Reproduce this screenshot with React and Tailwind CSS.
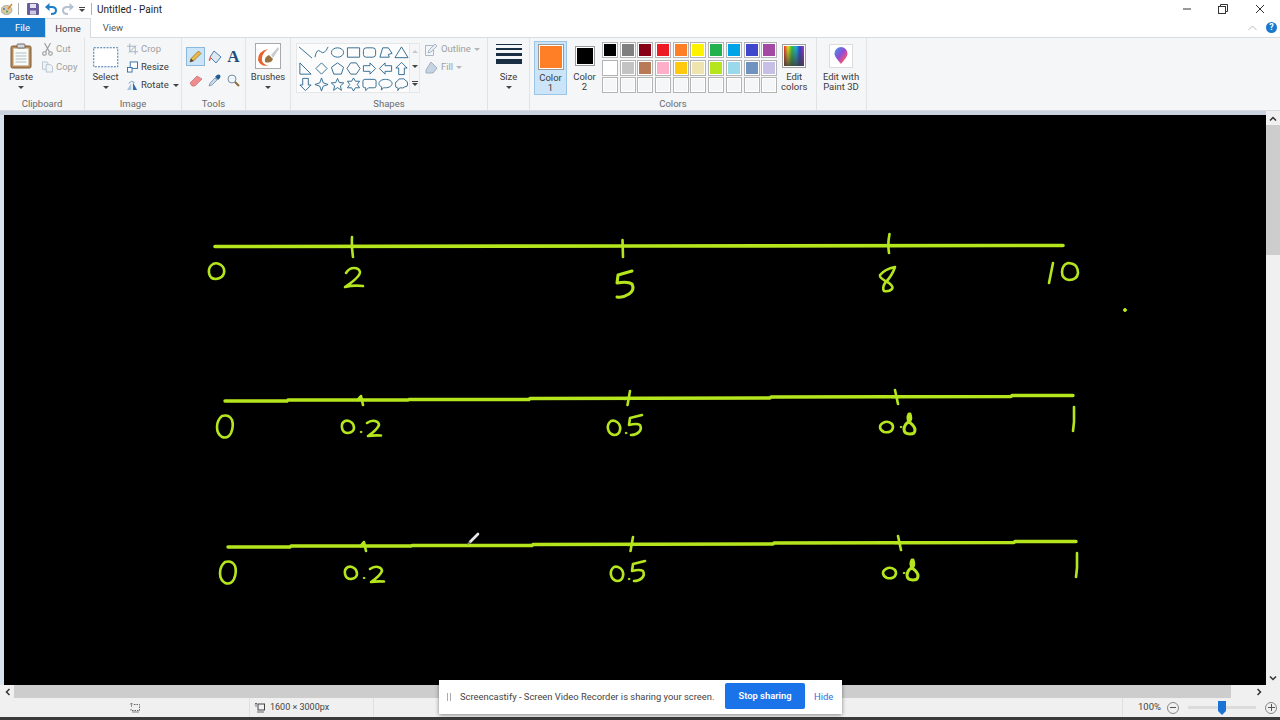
import React from "react";

const Tri = ({ c = "#444" }) => (
  <svg width="6" height="3" viewBox="0 0 6 3" className="block"><path d="M0 0h6L3 3z" fill={c} /></svg>
);

const Big = ({ w, icon, lines, arrow, className = "" }) => (
  <div className={`flex flex-col items-center pt-[5px] ${className}`} style={{ width: w }}>
    <div className="h-[29px] flex items-start justify-center">{icon}</div>
    {lines.map((l) => (
      <div key={l} className="h-[10px] leading-[10px] whitespace-nowrap">{l}</div>
    ))}
    {arrow && <div className="h-[10px] flex items-center"><Tri /></div>}
  </div>
);

const Small = ({ icon, label, gray, arrow }) => (
  <div className={`h-[18px] flex items-center gap-[3px] whitespace-nowrap ${gray ? "text-[#a0a0a0]" : "text-[#3c3c3c]"}`}>
    <span className="w-[11px] h-[12px] flex items-center justify-center shrink-0">{icon}</span>
    <span>{label}</span>
    {arrow && <span className="ml-[1px]"><Tri /></span>}
  </div>
);

const Group = ({ w, label, children }) => (
  <div className="flex flex-col h-full border-r border-[#e2e3e4] shrink-0" style={{ width: w }}>
    <div className="h-[59px] flex">{children}</div>
    <div className="h-[13px] leading-[13px] text-center text-[#6a6a6a]">{label}</div>
  </div>
);

const PasteIcon = () => (
  <svg width="22" height="26" viewBox="0 0 22 26">
    <rect x="1" y="3" width="20" height="22" rx="1.5" fill="#b98a5a" stroke="#7d5a35" />
    <rect x="3.5" y="5.5" width="15" height="17" fill="#fbfbf5" stroke="#c9c9b9" strokeWidth=".5" />
    <path d="M5.5 10h11M5.5 13h11M5.5 16h11M5.5 19h11" stroke="#a9bccb" />
    <rect x="7" y="1" width="8" height="4" rx="1" fill="#d8d8d8" stroke="#6a6a6a" />
  </svg>
);
const CutIcon = () => (
  <svg width="11" height="13" viewBox="0 0 11 13" fill="none" stroke="#9a9a9a" strokeWidth="1.1">
    <path d="M2.5 0l5 9M8.5 0l-5 9" /><circle cx="2.5" cy="10.5" r="1.8" /><circle cx="8.5" cy="10.5" r="1.8" />
  </svg>
);
const CopyIcon = () => (
  <svg width="12" height="12" viewBox="0 0 12 12" fill="#f1f4f7" stroke="#aebccb" strokeWidth=".9">
    <path d="M.5.5h5l1 1v7h-6z" /><path d="M4.5 3.5h5l2 2v6h-7z" />
  </svg>
);
const SelectIcon = () => (
  <svg width="26" height="21" viewBox="0 0 26 21" className="mt-[4px]">
    <rect x=".75" y=".75" width="24" height="19" fill="#fff" stroke="#3f78ad" strokeWidth="1" strokeDasharray="2 1.2" />
  </svg>
);
const CropIcon = () => (
  <svg width="12" height="12" viewBox="0 0 12 12" fill="none" stroke="#9fb0c2" strokeWidth="1">
    <path d="M3 0v9h9M0 3h9v9M2 10l8-8" />
  </svg>
);
const ResizeIcon = () => (
  <svg width="12" height="12" viewBox="0 0 12 12" fill="none" stroke="#2f6ea8" strokeWidth="1">
    <rect x="3.5" y=".5" width="8" height="7" fill="#fff" /><rect x=".5" y="6.5" width="5" height="5" fill="#fff" />
  </svg>
);
const RotateIcon = () => (
  <svg width="13" height="12" viewBox="0 0 13 12">
    <path d="M0 12L5 4v8z" fill="#a8c4de" /><path d="M7 12V3l5 9z" fill="#2f6ea8" /><path d="M2 4q3-4 7-1" fill="none" stroke="#5f8fbd" />
  </svg>
);
const PencilIcon = () => (
  <svg width="13" height="13" viewBox="0 0 13 13">
    <path d="M1 12l1-3.5L9.5 1 12 3.5 4.5 11z" fill="#e9b949" stroke="#8a6a2a" strokeWidth=".7" /><path d="M1 12l1-3.5 2.5 2.5z" fill="#444" />
  </svg>
);
const FillIcon = () => (
  <svg width="14" height="14" viewBox="0 0 14 14">
    <path d="M6 1l7 6-5 6-6-6z" fill="#dfe8f2" stroke="#4b7fb1" /><path d="M3 6Q0 9 1 11q2 0 2-5z" fill="#e2574c" />
  </svg>
);
const EraserIcon = () => (
  <svg width="14" height="12" viewBox="0 0 14 12">
    <path d="M1 8l7-7 5 3-7 7H3z" fill="#ee8d90" stroke="#c56a70" strokeWidth=".7" />
  </svg>
);
const PickerIcon = () => (
  <svg width="13" height="13" viewBox="0 0 13 13">
    <path d="M1 12l1-3 5-5 2 2-5 5z" fill="#c8d8e8" stroke="#53789b" strokeWidth=".6" /><path d="M7 3l2-2q2-1 3 0t0 3L10 6z" fill="#1f5d94" />
  </svg>
);
const MagIcon = () => (
  <svg width="13" height="13" viewBox="0 0 13 13" fill="none">
    <circle cx="5" cy="5" r="4" fill="#eef5fb" stroke="#7a8fa5" /><path d="M8 8l4 4" stroke="#8a6a3a" strokeWidth="2" />
  </svg>
);
const BrushIcon = () => (
  <svg width="26" height="26" viewBox="0 0 26 26">
    <rect x=".5" y=".5" width="25" height="25" fill="#fff" stroke="#a9a9a9" />
    <path d="M3 17Q3 8 13 6 6 11 7 18q2 5 8 4-9 3-12-5z" fill="#e8622a" />
    <path d="M10 19q-1-5 4-7l4 4q-2 5-8 3z" fill="#9a7040" />
    <path d="M16 12l7-8 1 2-6 9z" fill="#c9ccd0" />
  </svg>
);
const OutlineIcon = () => (
  <svg width="13" height="13" viewBox="0 0 13 13" fill="none" stroke="#a9b8c8">
    <path d="M.5 2.5h8v10h-8z" /><path d="M3 10l1-3 6-6 2 2-6 6z" fill="#e9ecf0" />
  </svg>
);
const FillShapeIcon = () => (
  <svg width="13" height="13" viewBox="0 0 13 13">
    <path d="M6 1l6 6-4 5H1v-3z" fill="#c5d3e2" stroke="#9fb0c2" />
  </svg>
);

const shapes = [
  <path d="M1 2l14 12" />,
  <path d="M1 13Q3 3 7 7t8-5" />,
  <ellipse cx="8" cy="8" rx="6.5" ry="5" />,
  <rect x="1.5" y="3" width="13" height="10" />,
  <rect x="1.5" y="3" width="13" height="10" rx="3" />,
  <path d="M2 13l3-10h6l4 6-4 1 1 3z" />,
  <path d="M8 2l7 11.5H1z" />,
  <path d="M2 2l12 12H2z" />,
  <path d="M8 2l6 6-6 6-6-6z" />,
  <path d="M8 2l6.5 4.7-2.5 7.3H4L1.5 6.7z" />,
  <path d="M5 2h6l4 6-4 6H5L1 8z" />,
  <path d="M1.5 5h7V2l6 6-6 6v-3h-7z" />,
  <path d="M14.5 5h-7V2l-6 6 6 6v-3h7z" />,
  <path d="M5 14.5v-7H2l6-6 6 6h-3v7z" />,
  <path d="M5 1.5v7H2l6 6 6-6h-3v-7z" />,
  <path d="M8 1l1.8 5.2L15 8l-5.2 1.8L8 15l-1.8-5.2L1 8l5.2-1.8z" />,
  <path d="M8 1.5l1.9 4.4 4.8.4-3.6 3.2 1.1 4.7L8 11.3l-4.2 2.9 1.1-4.7-3.6-3.2 4.8-.4z" />,
  <path d="M8 1l2 3.5h4.5L12 8l2.5 3.5H10L8 15l-2-3.5H1.5L4 8 1.5 4.5H6z" />,
  <path d="M3 2.5h10q2 0 2 2v5q0 2-2 2H7l-3 3v-3H3q-2 0-2-2v-5q0-2 2-2z" />,
  <path d="M8 2.5c4 0 7 2 7 4.5s-3 4.5-7 4.5q-1 0-2-.2L3.5 14l.5-3.4C2 9.800 1 8.500 1 7c0-2.500 3-4.500 7-4.500z" />,
  <path d="M4 4q1-3 4-2 3-1 4 1.500 3 1 2.500 4 .5 3-3 3-2 2-4 1-1 0-2 .5L4 14.500 4.500 12Q1 11.500 1.500 8 1 5 4 4z" />,
];

const row1 = ["#000000", "#7f7f7f", "#880015", "#ed1c24", "#ff7f27", "#fff200", "#22b14c", "#00a2e8", "#3f48cc", "#a349a4"];
const row2 = ["#ffffff", "#c3c3c3", "#b97a57", "#ffaec9", "#ffc90e", "#efe4b0", "#b5e61d", "#99d9ea", "#7092be", "#c8bfe7"];
const row3 = Array(10).fill("#f5f6f7");

const Swatch = ({ c }) => (
  <div className="w-[16px] h-[16px] border border-[#b4b4b4] bg-white p-[1px]">
    <div className="w-full h-full" style={{ background: c }} />
  </div>
);

const Drawing = () => (
  <svg viewBox="4 115 1262 570" width="1262" height="570" className="block" fill="none" stroke="#b5e61d" strokeLinecap="round" strokeLinejoin="round" strokeWidth="2.600">
    <path d="M215 246.500L640 246L1063 245.500" strokeWidth="3.600" />
    <path d="M352 237q-.5 10 1 20M622.500 240l.5 17M889.500 234q-2 10-.5 19" />
    <path d="M213 264q-5 3-4 9t7 6q7-1 8-6t-3-8q-4-3-8-1z" />
    <path d="M346 273q3-5 8-5t6 4q0 5-15 15 8-2 18-1" />
    <path d="M632 271l-14 4-1 8q11-2 15 1 3 6-3 10t-12 3" strokeWidth="3" />
    <path d="M895 267q-10 2-15 8-1 3 9 8 5 4 3 6-3 3-8 2-2-3 1-8 7-7 10-16" />
    <path d="M1053 263l-4 20" />
    <path d="M1068 263q-6 2-6 9t7 8q8 0 9-7 0-7-5-9-3-1-5-1z" />
    <circle cx="1125" cy="310" r="1.500" fill="#b5e61d" strokeWidth="1" />

    {[0, 1].map((i) => (
      <g key={i} transform={i ? "translate(3 146)" : undefined}>
        <path d="M225 401L287 401L288 400L408 400L409 399.500L529 399.500L530 398.500L770 398L771 397L1011 396.500L1012 395.500L1073 395.500" strokeWidth="3.400" />
        <path d="M360 397l-2.500 3M361 396l2 9M630 391l-2.500 14M625 399l4-1M895 390l3 14M892 397l7 0" />
        <path d="M222 416q-5 4-5 11t5 10q6 2 9-4 3-7 1-13-3-6-10-4z" />
        <path d="M345 421q-4 2-3 7t6 5q6-1 6-5t-3-6q-3-2-6-1z" />
        <circle cx="361" cy="432" r=".8" fill="#b5e61d" strokeWidth="1" />
        <path d="M367 423q4-3 8-2t4 4q-2 5-11 11 6-1 13-.5" />
        <path d="M611 421q-4 3-3 8t6 6q5 0 6-5t-3-8q-3-2-6-1z" />
        <circle cx="626" cy="433" r=".8" fill="#b5e61d" strokeWidth="1" />
        <path d="M642 415l-12 3-1 7q8-2 11 0 2 4-1 7t-8 3" />
        <path d="M885 422q-5 2-5 5t4 5q6 1 8-2t0-6q-3-3-7-2z" />
        <circle cx="901" cy="427" r=".8" fill="#b5e61d" strokeWidth="1" />
        <path d="M909 414q-2 4 0 8 6 4 6 8t-5 4q-6 0-6-5 1-6 5-7 3-3 1-8" strokeWidth="3" />
        <path d="M1074 407l0 15-1 9" />
      </g>
    ))}
    <path d="M470 542l8-8" stroke="#e8e8e8" strokeWidth="2.600" />
    <path d="M468 544l2-2" stroke="#8a8a8a" strokeWidth="1.500" />
  </svg>
);

export default function App() {
  return (
    <div className="relative w-[1280px] h-[720px] overflow-hidden flex flex-col bg-white text-[9.5px] text-[#3c3c3c] font-['Roboto',sans-serif]">
      {/* Title bar */}
      <div className="h-[18px] flex items-center shrink-0 pl-[1px]">
        <svg width="12" height="12" viewBox="0 0 12 12">
          <ellipse cx="5.500" cy="7" rx="5.500" ry="4.500" fill="#d9c9a0" stroke="#8a9aa8" strokeWidth=".7" />
          <circle cx="3" cy="6" r="1" fill="#3f78c8" /><circle cx="6" cy="8.500" r="1" fill="#3fa060" />
          <path d="M7 6l4-5" stroke="#d9822b" strokeWidth="1.500" />
        </svg>
        <span className="w-px h-[12px] bg-[#b0b0b0] ml-[5px]" />
        <svg width="12" height="12" viewBox="0 0 12 12" className="ml-[8px]">
          <path d="M.5.5h10l1 1v10H.500z" fill="#6a5a9e" stroke="#4e4380" strokeWidth=".7" />
          <rect x="3" y="1" width="6" height="4" fill="#e4e1ee" /><rect x="3" y="7.500" width="6" height="4" fill="#cfc9e2" />
        </svg>
        <svg width="12" height="12" viewBox="0 0 12 12" fill="none" className="ml-[6px]">
          <path d="M2 4h5q4 0 4 3.500T6 11" stroke="#1e7fc7" strokeWidth="2" /><path d="M4.500 0v8L0 4z" fill="#1e7fc7" />
        </svg>
        <svg width="12" height="12" viewBox="0 0 12 12" fill="none" className="ml-[5px]">
          <path d="M10 4H5Q1 4 1 7.500T6 11" stroke="#b4c2d0" strokeWidth="2" /><path d="M7.500 0v8L12 4z" fill="#b4c2d0" />
        </svg>
        <div className="ml-[5px] flex flex-col items-center gap-[1px]">
          <span className="w-[6px] h-px bg-[#444]" />
          <Tri />
        </div>
        <span className="w-px h-[12px] bg-[#b0b0b0] ml-[6px]" />
        <span className="ml-[5px] pt-[2px] text-[10px] leading-none text-[#222] whitespace-nowrap">Untitled - Paint</span>
        <div className="ml-auto flex items-center text-[#333]">
          <svg width="10" height="10" viewBox="0 0 10 10" className="mr-[26px]"><path d="M1 5h8" stroke="#333" /></svg>
          <svg width="10" height="10" viewBox="0 0 10 10" fill="none" stroke="#333" className="mr-[27px]"><path d="M2.500 2.500V.5h7v7h-2" /><rect x=".5" y="2.500" width="7" height="7" /></svg>
          <svg width="10" height="10" viewBox="0 0 10 10" className="mr-[15px]"><path d="M1 1l8 8M9 1l-8 8" stroke="#333" /></svg>
        </div>
      </div>

      {/* Tabs */}
      <div className="h-[19px] flex shrink-0 items-stretch relative">
        <div className="w-[45px] bg-[#1979ca] text-white text-center leading-[19px]">File</div>
        <div className="w-[46px] bg-[#f5f6f7] border-x border-t border-[#dadbdc] text-center leading-[19px] -mb-px z-10">Home</div>
        <div className="w-[44px] text-center leading-[19px] text-[#555]">View</div>
        <div className="ml-auto flex items-center">
          <svg width="9" height="6" viewBox="0 0 9 6" fill="none" className="mr-[9px]"><path d="M.5 5L4.500 1 8.500 5" stroke="#b9b9b9" /></svg>
          <span className="w-[11px] h-[11px] rounded-full bg-[#1979ca] text-white text-[9px] font-bold leading-[11px] text-center mr-[3px]">?</span>
        </div>
      </div>

      {/* Ribbon */}
      <div className="h-[74px] shrink-0 bg-[#f5f6f7] border-y border-[#dadbdc] flex">
        <Group w={85} label="Clipboard">
          <Big w={42} className="pt-[5px]" icon={<PasteIcon />} lines={["Paste"]} arrow />
          <div className="pt-[2px] text-[#a0a0a0]">
            <Small gray icon={<CutIcon />} label="Cut" />
            <Small gray icon={<CopyIcon />} label="Copy" />
          </div>
        </Group>
        <Group w={97} label="Image">
          <Big w={41} icon={<SelectIcon />} lines={["Select"]} arrow />
          <div className="pt-[2px] pl-[1px]">
            <Small gray icon={<CropIcon />} label="Crop" />
            <Small icon={<ResizeIcon />} label="Resize" />
            <Small icon={<RotateIcon />} label="Rotate" arrow />
          </div>
        </Group>
        <Group w={64} label="Tools">
          <div className="grid grid-cols-[19px_19px_19px] grid-rows-[19px_19px] gap-y-[5px] ml-[4px] mt-[9px] place-items-center">
            <div className="w-[19px] h-[19px] bg-[#cce4f7] border border-[#8bb8dd] flex items-center justify-center"><PencilIcon /></div>
            <FillIcon />
            <span className="font-['Liberation_Serif',serif] font-bold text-[17px] leading-none text-[#1f4e79]">A</span>
            <EraserIcon />
            <PickerIcon />
            <MagIcon />
          </div>
        </Group>
        <Group w={45} label="">
          <Big w={44} icon={<BrushIcon />} lines={["Brushes"]} arrow />
        </Group>
        <Group w={197} label="Shapes">
          <div className="ml-[5px] mt-[5px] h-[50px] w-[114px] bg-white/70 border border-[#e6e7e8] grid grid-cols-[repeat(7,16px)] grid-rows-[repeat(3,16px)] shrink-0 items-center pl-[1px]">
            {shapes.map((s, i) => (
              <svg key={i} width="15" height="15" viewBox="0 0 16 16" fill="none" stroke="#2f6a8f" strokeWidth="1" strokeLinejoin="round">{s}</svg>
            ))}
          </div>
          <div className="w-[10px] mt-[5px] h-[50px] flex flex-col items-center justify-around border-y border-r border-[#e6e7e8] shrink-0">
            <svg width="6" height="3" viewBox="0 0 6 3"><path d="M3 0l3 3H0z" fill="#c9c9c9" /></svg>
            <Tri />
            <div className="flex flex-col items-center gap-[1px]"><span className="w-[6px] h-px bg-[#444]" /><Tri /></div>
          </div>
          <div className="ml-[5px] pt-[2px] text-[#a0a0a0]">
            <div className="h-[18px] flex items-center gap-[3px]"><OutlineIcon /><span>Outline</span><Tri c="#b5b5b5" /></div>
            <div className="h-[18px] flex items-center gap-[3px]"><FillShapeIcon /><span>Fill</span><Tri c="#b5b5b5" /></div>
          </div>
        </Group>
        <Group w={42} label="">
          <Big
            w={41}
            icon={
              <div className="w-[26px] flex flex-col mt-[1px]">
                <span className="h-px bg-[#1a2e44]" />
                <span className="h-[2px] bg-[#1a2e44] mt-[3px]" />
                <span className="h-[3px] bg-[#1a2e44] mt-[3px]" />
                <span className="h-[5px] bg-[#1a2e44] mt-[3px]" />
              </div>
            }
            lines={["Size"]}
            arrow
          />
        </Group>
        <Group w={287} label="Colors">
          <div className="ml-[4px] mt-[3px] w-[33px] h-[54px] bg-[#cce4f7] border border-[#9cc4e4] flex flex-col items-center shrink-0 pt-[2px]">
            <div className="w-[26px] h-[26px] border border-[#9a9a9a] bg-white p-[1px]"><div className="w-full h-full bg-[#ff7f27]" /></div>
            <div className="h-[3px]" />
            <div className="h-[10px] leading-[10px]">Color</div>
            <div className="h-[10px] leading-[10px]">1</div>
          </div>
          <div className="w-[35px] flex flex-col items-center pt-[8px] shrink-0">
            <div className="h-[26px]">
              <div className="w-[20px] h-[20px] border border-[#9a9a9a] bg-white p-[1px]"><div className="w-full h-full bg-black" /></div>
            </div>
            <div className="h-[10px] leading-[10px]">Color</div>
            <div className="h-[10px] leading-[10px]">2</div>
          </div>
          <div className="mt-[4px] grid grid-cols-[repeat(10,16px)] grid-rows-[repeat(3,16px)] gap-x-[1.7px] gap-y-[1.5px] shrink-0 self-start">
            {[...row1, ...row2, ...row3].map((c, i) => <Swatch key={i} c={c} />)}
          </div>
          <Big
            w={36}
            className="ml-[-1px] shrink-0"
            icon={
              <div className="w-[24px] h-[24px] border border-[#a0a0a0] bg-white p-[1px] mt-[1px]">
                <div className="w-full h-full bg-[linear-gradient(90deg,#e03030,#f0e020,#30c040,#20b0e0,#3040d0,#c030c0)] relative">
                  <div className="w-full h-full bg-[linear-gradient(180deg,transparent,rgba(60,60,60,.85))]" />
                </div>
              </div>
            }
            lines={["Edit", "colors"]}
          />
        </Group>
        <Group w={50} label="">
          <Big
            w={48}
            icon={
              <div className="w-[24px] h-[24px] bg-white border border-[#dcdcdc] flex items-center justify-center mt-[1px]">
                <svg width="14" height="18" viewBox="0 0 14 18">
                  <defs>
                    <linearGradient id="p3d" x1="0" y1="0" x2="1" y2="1">
                      <stop offset="0" stopColor="#3aa0f0" /><stop offset=".45" stopColor="#8a50d8" /><stop offset=".75" stopColor="#f0507a" /><stop offset="1" stopColor="#f8a040" />
                    </linearGradient>
                  </defs>
                  <path d="M7 17C4 13 .5 10 .5 6.500a6.500 6.500 0 0113 0C13.500 10 10 13 7 17z" fill="url(#p3d)" />
                </svg>
              </div>
            }
            lines={["Edit with", "Paint 3D"]}
          />
        </Group>
      </div>

      {/* Canvas area */}
      <div className="flex-1 min-h-0 flex flex-col bg-[#d7e2ef]">
        <div className="flex flex-1 min-h-0">
          <div className="flex-1 min-w-0 flex flex-col">
            <div className="h-[4px] bg-[#c9d3e0] shrink-0" />
            <div className="pl-[4px] flex-1 min-h-0">
              <div className="w-full h-full bg-black"><Drawing /></div>
            </div>
          </div>
          <div className="w-[14px] bg-[#f0f0f0] flex flex-col items-center shrink-0 text-[#444]">
            <div className="h-[14px] flex items-center">
              <svg width="8" height="5" viewBox="0 0 8 5" fill="none"><path d="M1 4.500L4 1.500 7 4.500" stroke="#333" strokeWidth="1.500" /></svg>
            </div>
            <div className="w-full h-[130px] bg-[#cdcdcd]" />
            <div className="flex-1" />
            <div className="h-[14px] flex items-center">
              <svg width="8" height="5" viewBox="0 0 8 5" fill="none"><path d="M1 .5L4 3.500 7 .5" stroke="#333" strokeWidth="1.500" /></svg>
            </div>
          </div>
        </div>
        {/* Horizontal scrollbar */}
        <div className="h-[13px] shrink-0 bg-[#f0f0f0] flex items-center">
          <div className="w-[14px] flex justify-center">
            <svg width="5" height="8" viewBox="0 0 5 8" fill="none"><path d="M4.500 1L1.500 4 4.500 7" stroke="#333" strokeWidth="1.500" /></svg>
          </div>
          <div className="w-[1217px] h-full bg-[#cdcdcd]" />
          <div className="flex-1 flex justify-end pr-[18px]">
            <svg width="5" height="8" viewBox="0 0 5 8" fill="none"><path d="M.5 1L3.500 4 .5 7" stroke="#333" strokeWidth="1.500" /></svg>
          </div>
        </div>
      </div>

      {/* Status bar */}
      <div className="h-[19px] shrink-0 bg-[#f0f0f0] flex items-center text-[#444]">
        <div className="w-[250px] h-full border-r border-[#e0e0e0] flex items-center pl-[129px]">
          <svg width="11" height="11" viewBox="0 0 11 11" fill="none" stroke="#666"><path d="M2.500 1v4M1 2.500l1.500-1.500L4 2.500" strokeWidth=".7" /><path d="M5 2.500h5.500v6H2v-2" strokeDasharray="1.500 1" /><path d="M3 10h7" strokeWidth=".8" /></svg>
        </div>
        <div className="w-[124px] h-full border-r border-[#e0e0e0] flex items-center pl-[4px] gap-[5px]">
          <svg width="11" height="11" viewBox="0 0 11 11" fill="none" stroke="#444"><path d="M2 1v4M.8 2.200L2 1l1.200 1.200" strokeWidth=".7" /><rect x="4" y="2" width="6.500" height="6" /><path d="M3 10h7" strokeWidth=".8" /></svg>
          <span className="whitespace-nowrap text-[9px]">1600 × 3000px</span>
        </div>
        <div className="ml-auto w-[158px] h-full border-l border-[#e0e0e0] flex items-center pl-[15px]">
          <span className="w-[24px] whitespace-nowrap">100%</span>
          <span className="ml-[5px] w-[12px] h-[12px] rounded-full border border-[#888] flex items-center justify-center">
            <span className="w-[6px] h-px bg-[#555]" />
          </span>
          <div className="ml-[9px] w-[68px] h-[3px] bg-[#dcdcdc] relative">
            <svg width="8" height="14" viewBox="0 0 8 14" className="absolute left-[30px] -top-[5.5px]"><path d="M0 0h8v10l-4 4-4-4z" fill="#1b73d3" /></svg>
          </div>
          <span className="ml-[9px] w-[12px] h-[12px] rounded-full border border-[#888] flex items-center justify-center relative">
            <span className="w-[7px] h-px bg-[#555]" />
            <span className="absolute w-px h-[7px] bg-[#555]" />
          </span>
        </div>
      </div>
      <div className="h-[3px] shrink-0 bg-[#3a3a3a]" />

      {/* Sharing notification */}
      <div className="absolute left-[439px] top-[680px] w-[403px] h-[34px] bg-white shadow-[0_1px_4px_rgba(0,0,0,.45)] flex items-center text-[#444] text-[9.4px]">
        <div className="ml-[8px] flex gap-[2px]">
          <span className="w-px h-[8px] bg-[#aaa]" />
          <span className="w-px h-[8px] bg-[#aaa]" />
        </div>
        <span className="ml-[9px] whitespace-nowrap">Screencastify - Screen Video Recorder is sharing your screen.</span>
        <div className="absolute left-[286px] top-[3px] w-[80px] h-[26px] rounded-[2px] bg-[#1a73e8] text-white font-semibold flex items-center justify-center">Stop sharing</div>
        <span className="absolute left-[375px] text-[#1a73e8]">Hide</span>
      </div>
    </div>
  );
}
